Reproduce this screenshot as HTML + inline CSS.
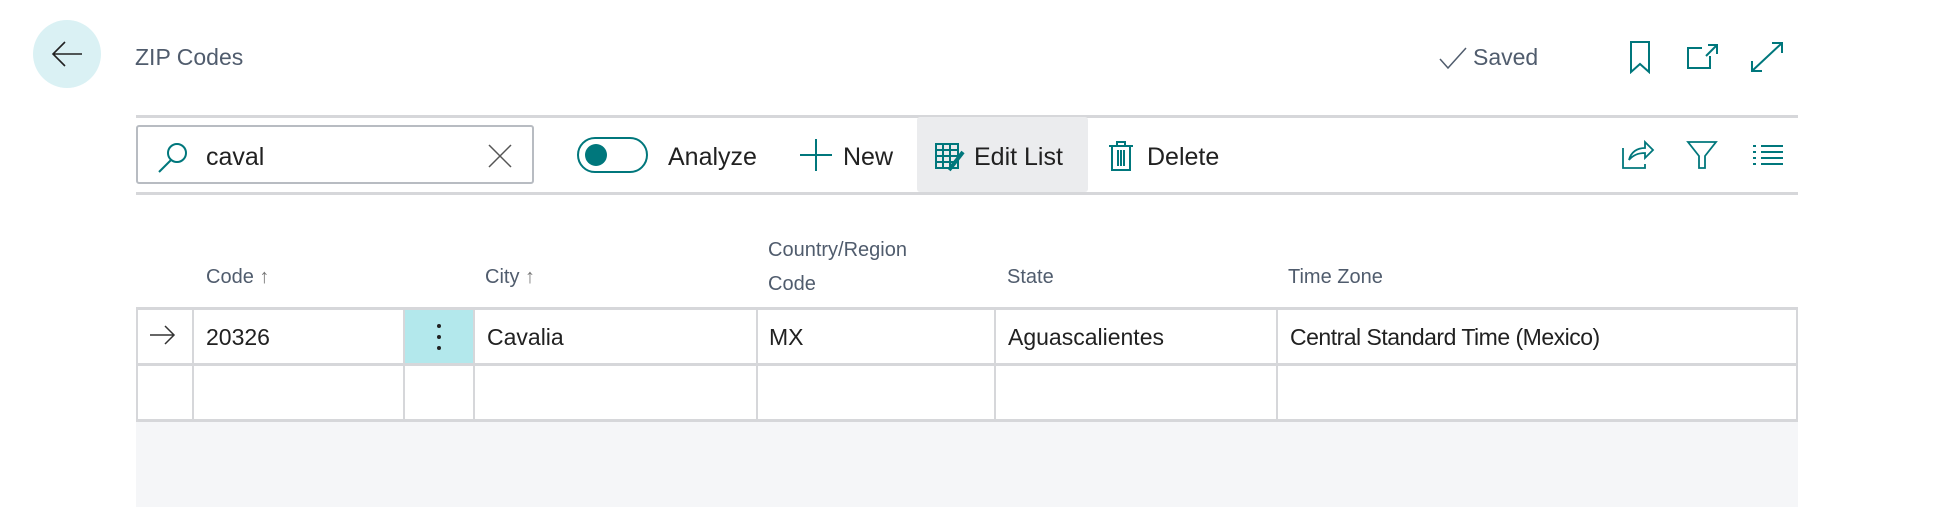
<!DOCTYPE html>
<html><head><meta charset="utf-8"><style>
*{margin:0;padding:0;box-sizing:border-box}
body{width:1936px;height:507px;background:#fff;position:relative;overflow:hidden;font-family:"Liberation Sans",sans-serif;color:#212121}
.a{position:absolute;white-space:nowrap}
.hd{color:#505c6d;font-size:20px}
.cell{font-size:23px;color:#212121}
.hl{position:absolute;background:#d6d7da;height:3px}
.vl{position:absolute;background:#d6d7da;width:2px;top:307px;height:113px}
</style></head><body>
<div class="a" style="left:33px;top:20px;width:68px;height:68px;border-radius:50%;background:#daf1f4"></div>
<svg class="a" style="left:50px;top:40px" width="34" height="28" viewBox="0 0 34 28"><path d="M32 14H3M15 2L3 14l12 12" fill="none" stroke="#222" stroke-width="1.6"/></svg>
<div class="a" style="left:135px;top:44px;font-size:23px;color:#505c6d">ZIP Codes</div>
<svg class="a" style="left:1438px;top:46px" width="30" height="24"><path d="M2 13l8 9L28 2" fill="none" stroke="#505c6d" stroke-width="1.5"/></svg>
<div class="a" style="left:1473px;top:44px;font-size:23px;color:#505c6d">Saved</div>
<svg class="a" style="left:1628px;top:40px" width="24" height="34"><path d="M3 2h18v30l-9-8-9 8z" fill="none" stroke="#00777c" stroke-width="2"/></svg>
<svg class="a" style="left:1686px;top:42px" width="34" height="28"><path d="M16 6H2v20h22V14M22 3h9v9M31 3L20 14" fill="none" stroke="#00777c" stroke-width="2"/></svg>
<svg class="a" style="left:1750px;top:41px" width="34" height="32"><path d="M22 2h10v10M32 2L2 30M2 20v10h10" fill="none" stroke="#00777c" stroke-width="2"/></svg>

<div class="hl" style="left:136px;top:115px;width:1662px"></div>
<div class="hl" style="left:136px;top:192px;width:1662px"></div>
<div class="a" style="left:136px;top:125px;width:398px;height:59px;border:2px solid #b8bcc2;border-radius:3px"></div>
<svg class="a" style="left:156px;top:141px" width="34" height="32"><circle cx="21" cy="12" r="9" fill="none" stroke="#00777c" stroke-width="2"/><path d="M15 19L3 31" stroke="#00777c" stroke-width="2"/></svg>
<div class="a" style="left:206px;top:143px;font-size:25px">caval</div>
<svg class="a" style="left:487px;top:143px" width="26" height="26"><path d="M2 2l22 22M24 2L2 24" stroke="#555" stroke-width="1.5"/></svg>
<div class="a" style="left:577px;top:137px;width:71px;height:36px;border:2px solid #00777c;border-radius:18px"></div>
<div class="a" style="left:585px;top:144px;width:22px;height:22px;border-radius:50%;background:#00777c"></div>
<div class="a" style="left:668px;top:143px;font-size:25px">Analyze</div>
<svg class="a" style="left:800px;top:139px" width="32" height="32"><path d="M16 0v32M0 16h32" stroke="#00777c" stroke-width="2"/></svg>
<div class="a" style="left:843px;top:143px;font-size:25px">New</div>
<div class="a" style="left:917px;top:117px;width:171px;height:75px;background:#ebecee;border-radius:3px"></div>
<svg class="a" style="left:934px;top:142px" width="32" height="30"><rect x="2" y="2" width="22" height="24" fill="none" stroke="#00777c" stroke-width="2"/><path d="M2 8h22M2 14h22M2 20h22M9 2v24M16 2v24" stroke="#00777c" stroke-width="2"/><path d="M29 10L15 28" stroke="#00777c" stroke-width="4"/></svg>
<div class="a" style="left:974px;top:143px;font-size:25px">Edit List</div>
<svg class="a" style="left:1108px;top:140px" width="26" height="32"><path d="M1 6h24M9 6V2h8v4M4 6v24h18V6M10 10v16M13 10v16M16 10v16" fill="none" stroke="#00777c" stroke-width="2"/></svg>
<div class="a" style="left:1147px;top:143px;font-size:25px">Delete</div>
<svg class="a" style="left:1621px;top:138px" width="34" height="32"><path d="M2 10v20h22v-4M8 22c2-8 8-12 16-12V4l8 8-8 8v-5c-7 0-12 2-16 7z" fill="none" stroke="#00777c" stroke-width="1.8"/></svg>
<svg class="a" style="left:1686px;top:140px" width="32" height="30"><path d="M2 2h28L19 16v12h-6V16z" fill="none" stroke="#00777c" stroke-width="1.8"/></svg>
<svg class="a" style="left:1753px;top:144px" width="30" height="22"><path d="M0 2h3M8 2h22M0 8h3M8 8h22M0 14h3M8 14h22M0 20h3M8 20h22" stroke="#00777c" stroke-width="2"/></svg>

<div class="a hd" style="left:206px;top:266px">Code <span style="color:#777">↑</span></div>
<div class="a hd" style="left:485px;top:266px">City <span style="color:#777">↑</span></div>
<div class="a hd" style="left:768px;top:233px;line-height:34px">Country/Region<br>Code</div>
<div class="a hd" style="left:1007px;top:266px">State</div>
<div class="a hd" style="left:1288px;top:266px">Time Zone</div>

<div class="a" style="left:404px;top:307px;width:70px;height:57px;background:#b3e8ec"></div>
<div class="hl" style="left:136px;top:307px;width:1662px"></div>
<div class="hl" style="left:136px;top:363px;width:1662px"></div>
<div class="hl" style="left:136px;top:419px;width:1662px"></div>
<div class="vl" style="left:136px"></div>
<div class="vl" style="left:192px"></div>
<div class="vl" style="left:403px"></div>
<div class="vl" style="left:473px"></div>
<div class="vl" style="left:756px"></div>
<div class="vl" style="left:994px"></div>
<div class="vl" style="left:1276px"></div>
<div class="vl" style="left:1796px"></div>
<div class="a" style="left:136px;top:422px;width:1662px;height:85px;background:#f5f6f8"></div>
<svg class="a" style="left:150px;top:325px" width="26" height="20"><path d="M0 10h24M15 1l9 9-9 9" fill="none" stroke="#333" stroke-width="1.5"/></svg>
<div class="a cell" style="left:206px;top:324px">20326</div>
<svg class="a" style="left:434px;top:322px" width="10" height="30"><circle cx="5" cy="4" r="2" fill="#222"/><circle cx="5" cy="15" r="2" fill="#222"/><circle cx="5" cy="26" r="2" fill="#222"/></svg>
<div class="a cell" style="left:487px;top:324px">Cavalia</div>
<div class="a cell" style="left:769px;top:324px">MX</div>
<div class="a cell" style="left:1008px;top:324px">Aguascalientes</div>
<div class="a cell" style="left:1290px;top:324px;letter-spacing:-0.5px">Central Standard Time (Mexico)</div>
</body></html>
